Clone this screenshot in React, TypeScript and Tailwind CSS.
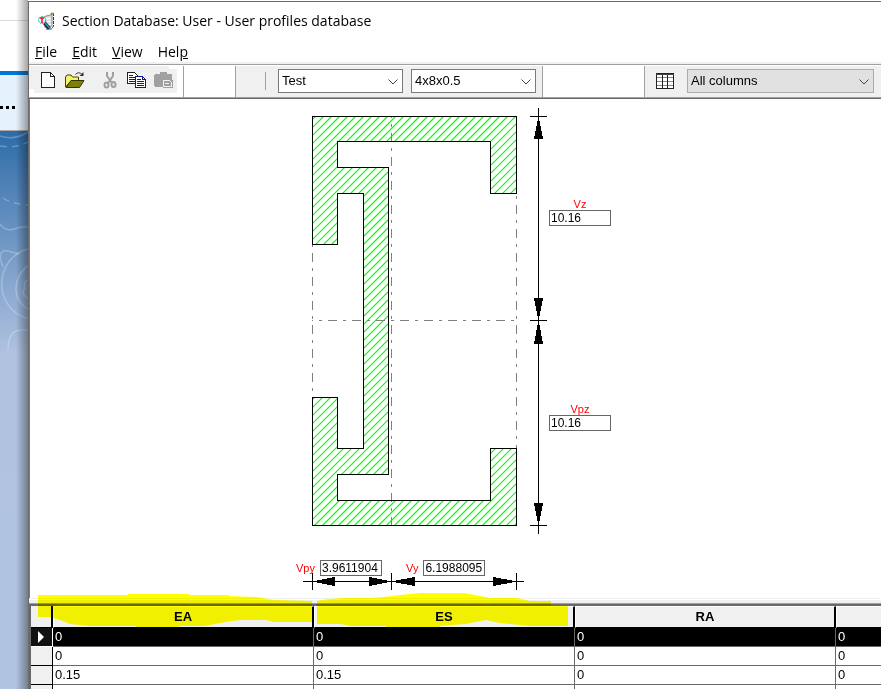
import { useState } from 'react';
import type { ReactNode } from 'react';

const COLUMNS = ['EA', 'ES', 'RA', ''];

const ROWS = [
  ['0', '0', '0', '0'],
  ['0', '0', '0', '0'],
  ['0.15', '0.15', '0', '0'],
  ['0.15', '0.15', '0', '0'],
];

const SECTION_PATH =
  'M312.5 116.5H516.5V193.5H490.5V141.5H337.5V167.5H388.5V474.5H337.5V500.5H490.5V448.5H516.5V525.5H312.5V397.5H337.5V448.5H363.5V193.5H337.5V244.5H312.5Z';

// 45 degree hatch, one line every 8px
const HATCH_PATH = Array.from({ length: 78 }, (_, i) => `M${432 + i * 8 - 526} 526L${432 + i * 8 - 116} 116`).join('');

function AppIcon() {
  return (
    <svg width="20" height="20" viewBox="0 0 20 20" className="shrink-0">
      <path d="M7.500 5.500L15 3.500V14.500L13 16.500H8Z" fill="#d8d8d8" stroke="#8a8a8a" />
      <path d="M9 7.500h5M10 10.500h4M11 13.500h3" stroke="#fff" strokeWidth="1.500" />
      <path d="M16.500 2V15L14.500 18H9" stroke="#333" fill="none" strokeDasharray="3 1" />
      <path d="M14.500 4V2.500H17" stroke="#7d8f3c" strokeWidth="1.500" fill="none" />
      <circle cx="5" cy="9" r="3.500" fill="#d5ffff" stroke="#2a9a9a" strokeDasharray="2 1" />
      <path d="M3 7h4M5 7v5" stroke="#e11" strokeWidth="1.500" />
      <path d="M7.500 12l5 5.500" stroke="#123" strokeWidth="3.500" />
      <path d="M8 12l4.500 5" stroke="#1c9cf0" strokeWidth="1.500" />
    </svg>
  );
}

function NewIcon() {
  return (
    <svg width="16" height="18" viewBox="0 0 16 18" shapeRendering="crispEdges">
      <path d="M1.500 1.500H10.500L14.500 5.500V16.500H1.500Z" fill="#fff" stroke="#222" />
      <path d="M10.500 1.500V5.500H14.500" fill="none" stroke="#222" />
    </svg>
  );
}

function OpenIcon() {
  return (
    <svg width="20" height="18" viewBox="0 0 20 18">
      <path d="M.5 16V6l1.500-2h4l1.500 2h6v4H6z" fill="#f3f36b" stroke="#444400" />
      <path d="M1 16.500L6 9.500h13l-4.500 7z" fill="#808000" stroke="#333300" />
      <path d="M10.500 3.500Q13.500 0 17 3.500" fill="none" stroke="#333" />
      <path d="M18.500 1v4h-4z" fill="#333" />
    </svg>
  );
}

function CutIcon() {
  return (
    <svg width="14" height="18" viewBox="0 0 14 18" fill="none" stroke="#a0a0a0">
      <path d="M4 1v4l5 7M10 1v4l-5 7" strokeWidth="2" />
      <ellipse cx="3.500" cy="14" rx="2" ry="2.500" strokeWidth="2" />
      <ellipse cx="10.500" cy="13.500" rx="2" ry="2.500" strokeWidth="2" />
    </svg>
  );
}

function CopyIcon() {
  return (
    <svg width="20" height="18" viewBox="0 0 20 18" shapeRendering="crispEdges">
      <path d="M.5 1.500H7.500L10.500 4.500V12.500H.5Z" fill="#fff" stroke="#222" />
      <path d="M2 4.500H6M2 6.500H8M2 8.500H8M2 10.500H8" stroke="#222" />
      <path d="M8.500 5.500H15.500L18.500 8.500V16.500H8.500Z" fill="#fff" stroke="#15158c" />
      <path d="M15.500 5.500V8.500H18.500M10 8.500H14M10 10.500H17M10 12.500H17M10 14.500H17" fill="none" stroke="#15158c" />
    </svg>
  );
}

function PasteIcon() {
  return (
    <svg width="20" height="18" viewBox="0 0 20 18" shapeRendering="crispEdges">
      <path d="M1 3H6V1H13V3H18V9H19V17H9V16H1L0 15V4Z" fill="#a0a0a0" />
      <path d="M9.500 15.500V9.500H15.500L17.500 11.500V15.500Z" fill="#a0a0a0" stroke="#f0f0f0" />
      <path d="M11 12.500H15" stroke="#f0f0f0" />
    </svg>
  );
}

function GridIcon() {
  return (
    <svg width="18" height="16" viewBox="0 0 18 16" shapeRendering="crispEdges">
      <path d="M0 0H18V16H0Z" fill="#fff" />
      <path d="M0 4.500H18M0 8.500H18M0 12.500H18" stroke="#8a8a8a" />
      <path d="M.5 .5H17.500V15.500H.5ZM6.500 0V16M11.500 0V16" fill="none" stroke="#222" />
      <path d="M0 1.500H18" stroke="#444" />
    </svg>
  );
}

function ToolButton({ label, className, disabled, children }: { label: string; className: string; disabled?: boolean; children: ReactNode }) {
  return (
    <button type="button" aria-label={label} disabled={disabled} className={className}>
      {children}
    </button>
  );
}

function Combo({ label, options, className }: { label: string; options: string[]; className: string }) {
  return (
    <div className={`relative h-6 ${className}`}>
      <select aria-label={label} className="block h-full w-full appearance-none border border-inherit pl-[3px] text-[13px] text-black outline-none">
        {options.map((option) => (
          <option key={option}>{option}</option>
        ))}
      </select>
      <svg width="10" height="6" viewBox="0 0 10 6" className="pointer-events-none absolute top-[10px] right-[5px]">
        <path d="M.5 .5L5 5L9.500 .5" fill="none" stroke="#444" />
      </svg>
    </div>
  );
}

function Desktop() {
  return (
    <aside className="relative flex w-7 shrink-0 flex-col overflow-hidden">
      <div className="h-[21px] shrink-0 border-b border-[#dcdcdc] bg-white" />
      <div className="h-[50px] shrink-0 bg-white" />
      <div className="h-1 shrink-0 bg-[#0078d7]" />
      <div className="flex h-[56px] shrink-0 items-center gap-[3px] border-b border-[#a9a9a9] bg-[#e5f1fb] pt-[10px]">
        <span className="h-[3px] w-[3px] bg-black" />
        <span className="h-[3px] w-[3px] bg-black" />
        <span className="h-[3px] w-[3px] bg-black" />
      </div>
      <div className="flex-1 bg-linear-to-b from-[#2c6ca8] from-0% via-[#b0c2df] via-40% to-[#b0c4e0]">
        <svg width="28" height="230" viewBox="0 131 28 230" fill="none" stroke="#fff" strokeOpacity=".25" strokeWidth="1.500">
          <path d="M0 136Q14 141 28 132" />
          <path d="M0 146Q14 149 28 142M3 198Q12 204 28 205" strokeDasharray="7 5" />
          <path d="M0 224Q6 232 14 229T28 227" />
          <path d="M28 249C-6 258 -8 308 28 319" />
          <path d="M28 266C12 276 12 302 28 309M3 267Q-4 249 8 251L19 254" />
          <path d="M28 280Q23 282 25 289Q20 292 28 299M8 350C8 334 14 328 28 330" />
        </svg>
      </div>
      <div className="absolute inset-y-0 right-0 w-3 bg-linear-to-r from-transparent to-black/35" />
    </aside>
  );
}

function MenuItem({ children }: { children: ReactNode }) {
  return (
    <button type="button" className="text-[14px] leading-5">
      {children}
    </button>
  );
}

function Toolbar() {
  return (
    <div className="flex h-8 shrink-0 border-t border-white bg-white">
      <div className="relative w-[155px] shrink-0 border-r border-[#a0a0a0]">
        <div className="absolute top-0 left-0 h-[23px] w-[140px] bg-[#f0f0f0]" />
        <div className="relative mt-[3px] ml-[5px] flex h-6 w-[143px] items-center bg-[#f0f0f0] pb-[2px] pl-[6px]">
          <ToolButton label="New" className="mr-[9px]">
            <NewIcon />
          </ToolButton>
          <ToolButton label="Open" className="mr-[18px]">
            <OpenIcon />
          </ToolButton>
          <ToolButton label="Cut" disabled className="mr-[10px]">
            <CutIcon />
          </ToolButton>
          <ToolButton label="Copy" className="mr-[7px]">
            <CopyIcon />
          </ToolButton>
          <ToolButton label="Paste" disabled className="mr-0">
            <PasteIcon />
          </ToolButton>
        </div>
      </div>
      <div className="w-[51px] shrink-0" />
      <div className="flex w-[308px] shrink-0 items-center border-x border-[#a0a0a0] bg-[#f0f0f0] pb-px pl-[29px]">
        <div className="mr-3 h-[18px] w-px bg-[#a0a0a0]" />
        <Combo label="Database" options={['Test']} className="mr-2 w-[125px] border-[#7a7a7a] bg-white" />
        <Combo label="Section" options={['4x8x0.5']} className="w-[125px] border-[#7a7a7a] bg-white" />
      </div>
      <div className="w-[101px] shrink-0" />
      <div className="flex flex-1 items-center border-l border-[#a0a0a0] bg-[#f0f0f0] pr-[7px] pb-px pl-[11px]">
        <ToolButton label="Table columns" className="mr-[13px]">
          <GridIcon />
        </ToolButton>
        <Combo label="Visible columns" options={['All columns']} className="flex-1 border-[#adadad] bg-[#e1e1e1]" />
      </div>
    </div>
  );
}

function Dimension({ id, label, value, className }: { id: string; label: string; value: string; className: string }) {
  return (
    <div className={`absolute flex items-center ${className}`}>
      <label htmlFor={id} className="text-[11px] leading-3 text-[#f00]">
        {label}
      </label>
      <input id={id} defaultValue={value} className="h-4 w-[62px] border border-[#666] bg-white pl-px text-[12px] leading-3 outline-none" />
    </div>
  );
}

function SectionDrawing() {
  return (
    <div className="shrink-0 border-l border-[#7c7c7c] bg-white pl-[265px]">
      <div className="relative w-[330px]">
        <svg width="330" height="499" viewBox="295 99 330 499" shapeRendering="crispEdges" className="block">
          <defs>
            <clipPath id="section">
              <path d={SECTION_PATH} />
            </clipPath>
          </defs>
          <g clipPath="url(#section)" shapeRendering="geometricPrecision">
            <path d={HATCH_PATH} fill="none" stroke="#00ff00" strokeWidth="1.200" />
          </g>
          <g stroke="#808080" strokeDasharray="9 6 3 6" strokeDashoffset="8">
            <path d="M312.500 117V525" />
            <path d="M391.500 117V525" />
            <path d="M516.500 117V525" />
            <path d="M312 320.500H516" />
          </g>
          <path d={SECTION_PATH} fill="none" stroke="#000" />
          <g stroke="#000">
            <path d="M538.500 108V534M530 116.500H547M530 320.500H547M530 525.500H547" />
            <path d="M303 581.500H524M312.500 573V590M391.500 573V590M516.500 573V590" />
          </g>
          <path d="M538 118H539L543 139H534ZM534 298H543L539 319H538ZM538 322H539L543 344H534ZM534 503H543L539 524H538Z" />
          <path d="M314 581V582L335 586V577ZM369 577V586L390 582V581ZM393 581V582L415 586V577ZM493 577V586L515 582V581Z" />
        </svg>
        <Dimension id="vz" label="Vz" value="10.16" className="top-[99px] left-[254px] flex-col" />
        <Dimension id="vpz" label="Vpz" value="10.16" className="top-[304px] left-[254px] flex-col" />
        <Dimension id="vpy" label="Vpy" value="3.9611904" className="top-[461px] left-[1px] gap-[5px]" />
        <Dimension id="vy" label="Vy" value="6.1988095" className="top-[461px] left-[111px] gap-[5px]" />
      </div>
    </div>
  );
}

// marker strokes over the first two headers
function Highlight() {
  return (
    <svg width="545" height="36" viewBox="36 593 545 36" className="pointer-events-none absolute -top-[5px] left-[7px] mix-blend-multiply">
      <path
        d="M38 595H128V594H189V595H229V596L257 597L274 600L312 601V622H274L266 620H240L232 621L220 623L205 626H179V627.500H136V626H90L70 624L60 620L50 617H38Z"
        fill="#ff0"
      />
      <path
        d="M317 601L328 599L345 598H371L384 597L400 595L420 593H464L475 595L490 598H517L530 601H551V606H568V626H530L500 623L486 620L465 624L440 626V627.500H386V626H352L340 624H317Z"
        fill="#ff0"
      />
    </svg>
  );
}

function ProfileTable() {
  const [current, setCurrent] = useState(0);

  return (
    <div className="relative flex-1">
      <div className="h-px bg-[#f0f0f0]" />
      <div className="h-1 border-t border-white bg-[#f0f0f0]" />
      <div className="border-t border-l border-[#a0a0a0] border-l-[#696969]">
        <table className="w-[1067px] table-fixed border-separate border-spacing-0 border-t-2 border-l border-[#696969] text-[13px]">
          <thead>
            <tr className="h-[22px]">
              <th className="w-[22px] border-r-2 border-b border-b-black border-r-black bg-[#f0f0f0] p-0" />
              {COLUMNS.map((name) => (
                <th key={name} className="w-[261px] border-t border-r-2 border-b border-l border-t-white border-r-black border-b-black border-l-white bg-[#f0f0f0] p-0 leading-4">
                  {name}
                </th>
              ))}
            </tr>
          </thead>
          <tbody>
            {ROWS.map((row, index) => (
              <tr key={index} onClick={() => setCurrent(index)} className={index === current ? 'h-[19px] bg-black text-white' : 'h-[19px] bg-white'}>
                <td className={`border-r border-b p-0 ${index === current ? 'border-white bg-[#111]' : 'border-black bg-[#f0f0f0]'}`}>
                  {index === current && (
                    <svg width="6" height="12" viewBox="0 0 6 12" className="ml-[7px]">
                      <path d="M0 0L6 6L0 12Z" fill="#fff" />
                    </svg>
                  )}
                </td>
                {row.map((value, i) => (
                  <td key={i} className="border-r border-b border-[#696969] py-0 pl-[2px] leading-4">
                    {value}
                  </td>
                ))}
              </tr>
            ))}
          </tbody>
        </table>
      </div>
      <Highlight />
    </div>
  );
}

export default function App() {
  return (
    <div className="flex h-screen overflow-hidden bg-white font-['Liberation_Sans',sans-serif] text-black">
      <Desktop />
      <main className="mt-px flex min-w-0 flex-1 flex-col overflow-hidden border-t border-l border-[#6b6b6b] bg-white">
        <header className="flex h-[37px] shrink-0 items-center gap-[5px] pl-2 font-['Open_Sans',sans-serif]">
          <AppIcon />
          <h1 className="text-[14px]">Section Database: User - User profiles database</h1>
        </header>
        <nav className="flex h-[25px] shrink-0 items-center gap-[15px] border-b-2 border-[#f0f0f0] pt-[3px] pl-[6px] font-['Open_Sans',sans-serif]">
          <MenuItem>
            <u>F</u>ile
          </MenuItem>
          <MenuItem>
            <u>E</u>dit
          </MenuItem>
          <MenuItem>
            <u>V</u>iew
          </MenuItem>
          <MenuItem>
            Hel<u>p</u>
          </MenuItem>
        </nav>
        <div className="shrink-0 border-y border-[#a0a0a0]">
          <Toolbar />
        </div>
        <div className="h-px shrink-0 bg-[#696969]" />
        <SectionDrawing />
        <ProfileTable />
      </main>
    </div>
  );
}
